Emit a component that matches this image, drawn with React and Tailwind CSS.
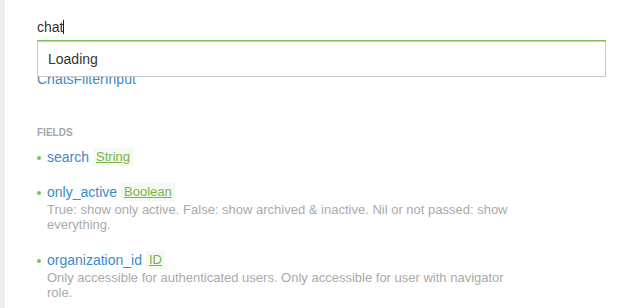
import React from 'react';

const FIELDS = [
  { name: 'search', type: 'String' },
  {
    name: 'only_active',
    type: 'Boolean',
    description: 'True: show only active. False: show archived & inactive. Nil or not passed: show everything.',
  },
  {
    name: 'organization_id',
    type: 'ID',
    description: 'Only accessible for authenticated users. Only accessible for user with navigator role.',
  },
];

export default function App() {
  return (
    <div className="flex h-[308px] w-full bg-white overflow-hidden" style={{ fontFamily: '"Liberation Sans", Arial, sans-serif' }}>
      {/* Left strip */}
      <div className="w-[5px] flex-shrink-0 bg-[#efefef]" />

      <div className="relative flex-1 pl-[32px] pr-[16px]">
        {/* Search input */}
        <div className="w-[569px] pt-[17px] pb-[3px] border-b border-[#7dc15a]">
          <div className="flex items-center h-5 text-[14px] leading-5 text-[#333]">
            chat
            <span className="w-px h-[14px] bg-[#222]" />
          </div>
        </div>

        {/* Dropdown */}
        <div className="absolute top-[41px] left-[32px] w-[569px] h-[36px] bg-white border border-[#c8c8c8] flex items-center pl-[10px] z-10">
          <span className="text-[14px] leading-5 text-[#333]">Loading</span>
        </div>

        {/* Type title */}
        <div className="mt-[28px] text-[14px] leading-5 text-[#3b8bcb]">ChatsFilterInput</div>

        {/* Fields */}
        <div className="mt-[37px] text-[10px] leading-[14px] font-bold text-[#a6a6a6] uppercase">Fields</div>

        <div className="mt-[7px] flex flex-col">
          {FIELDS.map((f, i) => (
            <div key={f.name} className={i === 0 ? '' : i === 1 ? 'mt-[15px]' : 'mt-[18px]'}>
              <div className="flex items-center h-5">
                <span className="w-[4px] h-[4px] rounded-full bg-[#7dc15a] mr-[6px] mt-[1px]" />
                <span className="text-[14px] leading-5 text-[#3b8bcb]">{f.name}</span>
                <span className="ml-[4px] h-[18px] px-[3px] text-[13px] leading-[18px] text-[#7cb342] underline bg-[#f4f9f1]">
                  {f.type}
                </span>
              </div>
              {f.description && (
                <p className="pl-[10px] w-[485px] text-[13px] leading-[15px] text-[#aaaaaa]">{f.description}</p>
              )}
            </div>
          ))}
        </div>
      </div>
    </div>
  );
}
